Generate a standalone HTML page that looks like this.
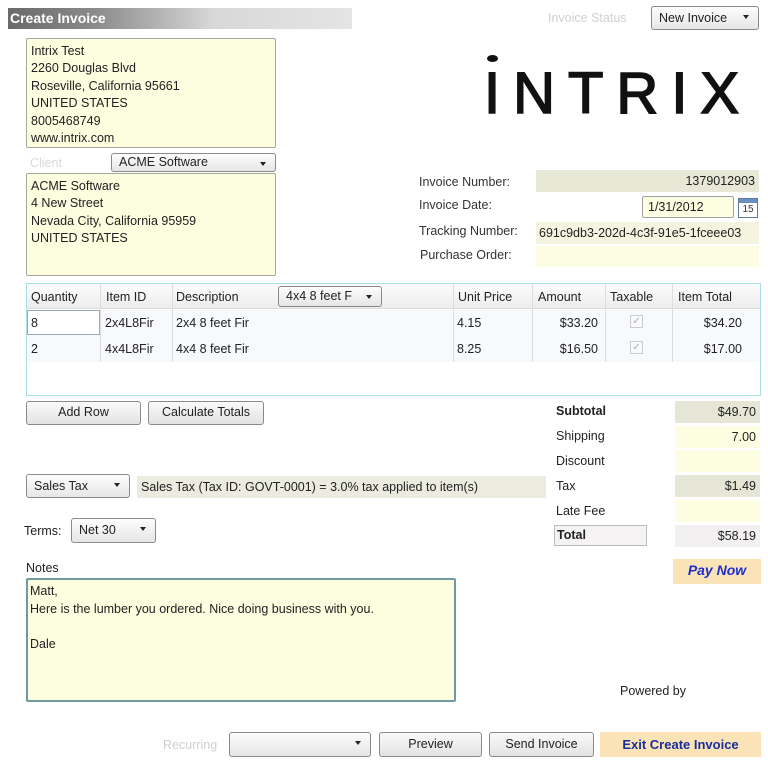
<!DOCTYPE html>
<html><head><meta charset="utf-8"><style>
*{box-sizing:border-box;margin:0;padding:0}
body{width:768px;height:766px;background:#fff;font-family:"Liberation Sans",sans-serif;font-size:12.5px;color:#222;position:relative;overflow:hidden}
.a{position:absolute;white-space:nowrap}
.box{position:absolute;background:#fdfde0;border:1px solid #a8a8a0;border-radius:2px}
.dd{position:absolute;border:1px solid #8a8a8a;border-radius:3px;background:linear-gradient(#fdfdfd,#e6e6e6);padding-left:7px;line-height:20px}
.dd:after{content:"";position:absolute;right:9px;top:8px;border-left:3.5px solid transparent;border-right:3.5px solid transparent;border-top:4px solid #222}
.btn{position:absolute;border:1px solid #8a8a8a;border-radius:3px;background:linear-gradient(#fafafa,#e2e2e2);text-align:center;line-height:21px}
.fld{position:absolute;height:22px;line-height:22px}
.lbl{color:#333}
</style></head><body>
<div class="a" style="left:8px;top:8px;width:344px;height:21px;background:linear-gradient(90deg,#6a6a6a,#8a8a8a 25%,#d8d8d8 60%,#e4e4e4);color:#fff;font-weight:bold;font-size:14px;line-height:21px;padding-left:2px">Create Invoice</div>

<div class="box" style="left:26px;top:38px;width:250px;height:110px;padding:4px 4px;line-height:17.4px">Intrix Test<br>2260 Douglas Blvd<br>Roseville, California 95661<br>UNITED STATES<br>8005468749<br>www.intrix.com</div>
<div class="a" style="left:30px;top:156px;color:#d8d8d8">Client</div>
<div class="dd" style="left:111px;top:153px;width:165px;height:19px;line-height:17px">ACME Software</div>
<div class="box" style="left:26px;top:173px;width:250px;height:103px;padding:4px 4px;line-height:17.4px">ACME Software<br>4 New Street<br>Nevada City, California 95959<br>UNITED STATES</div>

<div class="a" style="left:548px;top:11px;color:#d0d0d0">Invoice Status</div>
<div class="dd" style="left:651px;top:6px;width:108px;height:24px;line-height:22px">New Invoice</div>

<div class="a" style="left:484px;top:49px;font-size:58px;letter-spacing:13px;color:#111;line-height:90px;-webkit-text-stroke:1.6px #111">INTRIX</div>
<div class="a" style="left:487px;top:55px;width:11px;height:7px;border-radius:50%;background:#111"></div>

<div class="a lbl" style="left:419px;top:175px">Invoice Number:</div>
<div class="fld" style="left:536px;top:170px;width:223px;background:#e8e8d6;text-align:right;padding-right:4px">1379012903</div>
<div class="a lbl" style="left:419px;top:198px">Invoice Date:</div>
<div class="fld" style="left:642px;top:196px;width:92px;background:#fdfde2;border:1px solid #a0a0a0;border-radius:2px;padding-left:5px;line-height:20px">1/31/2012</div>
<div class="a" style="left:738px;top:198px;width:20px;height:20px;border:1px solid #5a7aa0;background:#fff;font-size:10px;text-align:center;line-height:22px;color:#334"><div style="position:absolute;left:0;top:0;width:18px;height:4px;background:#6a90c0"></div>15</div>
<div class="a lbl" style="left:419px;top:224px">Tracking Number:</div>
<div class="fld" style="left:536px;top:222px;width:223px;background:#f4f4e0;padding-left:3px;overflow:hidden">691c9db3-202d-4c3f-91e5-1fceee03</div>
<div class="a lbl" style="left:420px;top:248px">Purchase Order:</div>
<div class="fld" style="left:536px;top:246px;width:223px;background:#fdfde4;height:21px"></div>

<div class="a" style="left:26px;top:283px;width:735px;height:113px;border:1px solid #a8dfe6;background:#fff"></div>
<div class="a" style="left:27px;top:284px;width:733px;height:25px;background:linear-gradient(#fdfdfd,#ececec);border-bottom:1px solid #ddd"></div>
<div class="a" style="left:27px;top:310px;width:733px;height:52px;background:#f7f9fd"></div>
<div class="a" style="left:27px;top:310px;width:73px;height:25px;background:#fff;border:1px solid #9ab"></div>
<div class="a" style="left:100px;top:284px;width:1px;height:78px;background:#ddd"></div>
<div class="a" style="left:172px;top:284px;width:1px;height:78px;background:#ddd"></div>
<div class="a" style="left:453px;top:284px;width:1px;height:78px;background:#ddd"></div>
<div class="a" style="left:532px;top:284px;width:1px;height:78px;background:#ddd"></div>
<div class="a" style="left:605px;top:284px;width:1px;height:78px;background:#ddd"></div>
<div class="a" style="left:672px;top:284px;width:1px;height:78px;background:#ddd"></div>
<div class="a" style="left:31px;top:290px">Quantity</div>
<div class="a" style="left:106px;top:290px">Item ID</div>
<div class="a" style="left:176px;top:290px">Description</div>
<div class="dd" style="left:278px;top:286px;width:104px;height:21px;line-height:19px">4x4 8 feet F</div>
<div class="a" style="left:458px;top:290px">Unit Price</div>
<div class="a" style="left:538px;top:290px">Amount</div>
<div class="a" style="left:610px;top:290px">Taxable</div>
<div class="a" style="left:678px;top:290px">Item Total</div>
<div class="a" style="left:31px;top:316px">8</div><div class="a" style="left:105px;top:316px">2x4L8Fir</div><div class="a" style="left:176px;top:316px">2x4 8 feet Fir</div><div class="a" style="left:457px;top:316px">4.15</div><div class="a" style="left:536px;top:316px;width:62px;text-align:right">$33.20</div><div class="a" style="left:630px;top:315px;width:13px;height:13px;border:1px solid #ccc;color:#aaa;font-size:10px;text-align:center;line-height:12px">✓</div><div class="a" style="left:676px;top:316px;width:90px;text-align:right;padding-right:24px">$34.20</div>
<div class="a" style="left:31px;top:342px">2</div><div class="a" style="left:105px;top:342px">4x4L8Fir</div><div class="a" style="left:176px;top:342px">4x4 8 feet Fir</div><div class="a" style="left:457px;top:342px">8.25</div><div class="a" style="left:536px;top:342px;width:62px;text-align:right">$16.50</div><div class="a" style="left:630px;top:341px;width:13px;height:13px;border:1px solid #ccc;color:#aaa;font-size:10px;text-align:center;line-height:12px">✓</div><div class="a" style="left:676px;top:342px;width:90px;text-align:right;padding-right:24px">$17.00</div>

<div class="btn" style="left:26px;top:401px;width:115px;height:24px">Add Row</div>
<div class="btn" style="left:148px;top:401px;width:116px;height:24px">Calculate Totals</div>

<div class="a" style="left:556px;top:404px;font-weight:bold">Subtotal</div>
<div class="fld" style="left:675px;top:401px;width:85px;background:#e6e6d6;text-align:right;padding-right:4px">$49.70</div>
<div class="a" style="left:556px;top:429px">Shipping</div>
<div class="fld" style="left:675px;top:426px;width:85px;background:#fdfde2;text-align:right;padding-right:4px">7.00</div>
<div class="a" style="left:556px;top:454px">Discount</div>
<div class="fld" style="left:675px;top:450px;width:85px;background:#fdfde2"></div>
<div class="a" style="left:556px;top:479px">Tax</div>
<div class="fld" style="left:675px;top:475px;width:85px;background:#e6e6d6;text-align:right;padding-right:4px">$1.49</div>
<div class="a" style="left:556px;top:504px">Late Fee</div>
<div class="fld" style="left:675px;top:500px;width:85px;background:#fdfde2"></div>
<div class="a" style="left:554px;top:525px;width:93px;height:21px;border:1px solid #bbb;background:#f4f2f2;font-weight:bold;padding-left:2px;line-height:19px">Total</div>
<div class="fld" style="left:675px;top:525px;width:85px;background:#f2f0f0;text-align:right;padding-right:4px">$58.19</div>

<div class="dd" style="left:26px;top:474px;width:104px;height:24px;line-height:22px">Sales Tax</div>
<div class="fld" style="left:137px;top:476px;width:409px;background:#ebebdf;padding-left:4px">Sales Tax (Tax ID: GOVT-0001) = 3.0% tax applied to item(s)</div>
<div class="a" style="left:24px;top:524px">Terms:</div>
<div class="dd" style="left:71px;top:518px;width:85px;height:25px;line-height:23px">Net 30</div>

<div class="a" style="left:673px;top:559px;width:88px;height:25px;background:#fbe3b8;color:#1a2ecc;font-weight:bold;font-style:italic;font-size:14px;text-align:center;line-height:23px">Pay Now</div>
<div class="a" style="left:26px;top:561px">Notes</div>
<div class="box" style="left:26px;top:578px;width:430px;height:124px;border:2px solid #6e9aa6;padding:3px 2px;line-height:17.5px">Matt,<br>Here is the lumber you ordered. Nice doing business with you.<br><br>Dale</div>
<div class="a" style="left:620px;top:684px">Powered by</div>

<div class="a" style="left:163px;top:738px;color:#d0d0d0">Recurring</div>
<div class="dd" style="left:229px;top:732px;width:142px;height:25px"></div>
<div class="btn" style="left:379px;top:732px;width:103px;height:25px;line-height:23px">Preview</div>
<div class="btn" style="left:489px;top:732px;width:105px;height:25px;line-height:23px">Send Invoice</div>
<div class="a" style="left:600px;top:732px;width:161px;height:25px;background:#fbe3b8;color:#1a2e9a;font-weight:bold;text-align:center;line-height:25px;font-size:13px">Exit Create Invoice</div>
</body></html>
